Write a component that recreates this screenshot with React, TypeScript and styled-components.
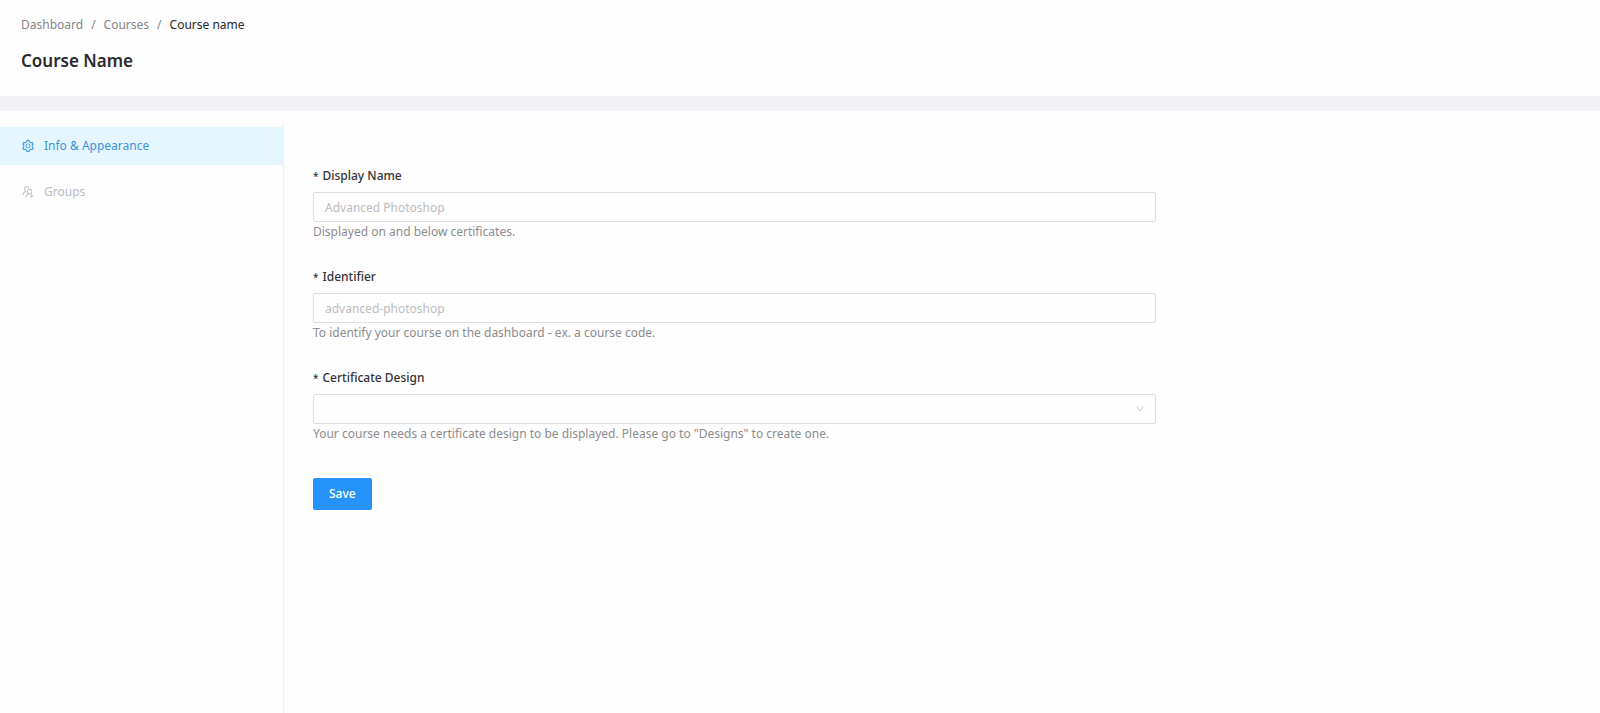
import React from "react";
import styled, { createGlobalStyle } from "styled-components";
import { AiOutlineDown, AiOutlineSetting, AiOutlineUsergroupAdd } from "react-icons/ai";

const GlobalStyle = createGlobalStyle`
  *, *::before, *::after { box-sizing: border-box; }
  body {
    margin: 0;
    background: #fefefe;
    color: #333236;
    font-family: "Noto Sans", "Open Sans", sans-serif;
    font-size: 12px;
    line-height: 20px;
  }
  input, select, button { font: inherit; }
`;

const Page = styled.div`
  display: flex;
  flex-direction: column;
  min-height: 100vh;
`;

const Header = styled.header`
  padding: 15px 21px 23px;
  border-bottom: 15px solid #f1f0f4;
`;

const Crumbs = styled.ol`
  display: flex;
  gap: 8px;
  margin: 0 0 13px;
  padding: 0;
  list-style: none;
  color: #858587;
`;

const Crumb = styled.li<{ $current?: boolean }>`
  display: flex;
  gap: 8px;
  color: ${({ $current }) => ($current ? "#262528" : "inherit")};

  &:not(:first-child)::before {
    content: "/";
    color: #858587;
  }
`;

const CrumbLink = styled.a`
  color: inherit;
  text-decoration: none;
`;

const Title = styled.h1`
  margin: 0;
  font-size: 17px;
  line-height: 25px;
  font-weight: 600;
  color: #2a292c;
`;

const Body = styled.div`
  display: flex;
  flex: 1;
  padding-top: 12px;
`;

const Sidebar = styled.nav`
  display: flex;
  flex-direction: column;
  flex: 0 0 284px;
  gap: 8px;
  padding-top: 4px;
  border-right: 1px solid #f0f0f0;
`;

const MenuLink = styled.a<{ $active?: boolean }>`
  display: flex;
  align-items: center;
  gap: 9px;
  height: 38px;
  padding: 0 21px;
  text-decoration: none;
  color: ${({ $active }) => ($active ? "#3c92dd" : "#bdbdbe")};
  background: ${({ $active }) => ($active ? "#e5f6fe" : "transparent")};

  svg { width: 14px; height: 14px; }
`;

const Main = styled.main`
  flex: 1;
  padding: 43px 29px;
`;

const Form = styled.form`
  display: flex;
  flex-direction: column;
  align-items: flex-start;
  gap: 25px;
  width: 67%;
`;

const Field = styled.div`
  display: flex;
  flex-direction: column;
  width: 100%;
`;

const Label = styled.label`
  margin-bottom: 6px;
  font-weight: 500;

  &::before {
    content: "*";
    margin-right: 4px;
    font-size: 10px;
  }
`;

const Input = styled.input`
  width: 100%;
  height: 30px;
  padding: 0 11px;
  border: 1px solid #dedee1;
  border-radius: 2px;
  background: #fefefe;
  color: inherit;

  &::placeholder { color: #bdbdbf; opacity: 1; }
`;

const SelectWrap = styled.div`
  display: grid;
  align-items: center;

  & > * { grid-area: 1 / 1; }

  svg {
    justify-self: end;
    width: 10px;
    height: 10px;
    margin-right: 11px;
    color: #bdbdbf;
    pointer-events: none;
  }
`;

const Select = styled(Input).attrs({ as: "select" })`
  appearance: none;
`;

const Help = styled.span`
  color: #8c8c8e;
`;

const SaveButton = styled.button`
  height: 32px;
  margin-top: 9px;
  padding: 0 15px;
  border: 1px solid #2593fa;
  border-radius: 2px;
  background: #2593fa;
  color: #fff;
  font-weight: 500;
`;

export default function App() {
  return (
    <Page>
      <GlobalStyle />
      <Header>
        <Crumbs aria-label="Breadcrumb">
          <Crumb><CrumbLink href="#dashboard">Dashboard</CrumbLink></Crumb>
          <Crumb><CrumbLink href="#courses">Courses</CrumbLink></Crumb>
          <Crumb $current aria-current="page">Course name</Crumb>
        </Crumbs>
        <Title>Course Name</Title>
      </Header>
      <Body>
        <Sidebar>
          <MenuLink $active href="#info"><AiOutlineSetting />Info &amp; Appearance</MenuLink>
          <MenuLink href="#groups"><AiOutlineUsergroupAdd />Groups</MenuLink>
        </Sidebar>
        <Main>
          <Form>
            <Field>
              <Label htmlFor="display-name">Display Name</Label>
              <Input id="display-name" placeholder="Advanced Photoshop" />
              <Help>Displayed on and below certificates.</Help>
            </Field>
            <Field>
              <Label htmlFor="identifier">Identifier</Label>
              <Input id="identifier" placeholder="advanced-photoshop" />
              <Help>To identify your course on the dashboard - ex. a course code.</Help>
            </Field>
            <Field>
              <Label htmlFor="design">Certificate Design</Label>
              <SelectWrap>
                <Select id="design" />
                <AiOutlineDown />
              </SelectWrap>
              <Help>Your course needs a certificate design to be displayed. Please go to "Designs" to create one.</Help>
            </Field>
            <SaveButton type="button">Save</SaveButton>
          </Form>
        </Main>
      </Body>
    </Page>
  );
}
